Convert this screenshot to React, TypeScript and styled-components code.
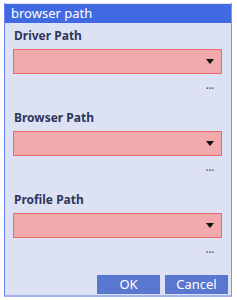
import styled, { createGlobalStyle } from 'styled-components';

const GlobalStyle = createGlobalStyle`
  html, body {
    margin: 0;
    padding: 0;
    background: #ffffff;
  }
  body {
    font-family: "Noto Sans", "Open Sans", sans-serif;
  }
`;

const fields = ['Driver Path', 'Browser Path', 'Profile Path'];

const ArrowIcon = () => (
  <svg width="8" height="5" viewBox="0 0 8 5">
    <path d="M0 0 H8 L4 5 Z" fill="#111" />
  </svg>
);

const App = () => {
  return (
    <>
      <GlobalStyle />
      <Page>
        <Dialog>
          <TitleBar>browser path</TitleBar>
          <Body>
            {fields.map((label) => (
              <Field key={label}>
                <Label>{label}</Label>
                <PathSelect>
                  <ArrowIcon />
                </PathSelect>
                <MoreRow>
                  <More>...</More>
                </MoreRow>
              </Field>
            ))}
            <ButtonRow>
              <Button>OK</Button>
              <Button>Cancel</Button>
            </ButtonRow>
          </Body>
        </Dialog>
      </Page>
    </>
  );
};

export default App;

const Page = styled.div`
  width: 237px;
  height: 300px;
  padding: 3px 0 0 4px;
  box-sizing: border-box;
`;

const Dialog = styled.div`
  width: 228px;
  height: 294px;
  box-sizing: border-box;
  display: flex;
  flex-direction: column;
  background: #dde1f4;
  border-left: 1px solid #6b86f2;
  border-right: 1px solid #7d95f0;
  border-bottom: 2px solid #a3b2ea;
`;

const TitleBar = styled.div`
  height: 19px;
  margin-top: 1px;
  background: #4169e1;
  color: #ffffff;
  font-size: 13px;
  line-height: 19px;
  padding-left: 6px;
`;

const Body = styled.div`
  flex: 1;
  display: flex;
  flex-direction: column;
  padding: 5px 3px 0 8px;
`;

const Field = styled.div`
  display: flex;
  flex-direction: column;
  margin-right: 6px;
`;

const Label = styled.div`
  font-size: 12px;
  line-height: 16px;
  font-weight: 700;
  color: #2e3759;
  padding-left: 1px;
`;

const PathSelect = styled.div`
  margin-top: 5px;
  height: 25px;
  box-sizing: border-box;
  background: #f2a9ab;
  border: 1px solid #e86a6d;
  display: flex;
  align-items: center;
  justify-content: flex-end;
  padding-right: 7px;
`;

const MoreRow = styled.div`
  display: flex;
  justify-content: flex-end;
  height: 36px;
  padding-right: 8px;
`;

const More = styled.span`
  font-family: "DejaVu Sans", sans-serif;
  font-size: 8px;
  font-weight: 700;
  line-height: 10px;
  margin-top: 8px;
  color: #5d6478;
  letter-spacing: -0.3px;
`;

const ButtonRow = styled.div`
  display: flex;
  justify-content: flex-end;
  gap: 5px;
  margin-top: 1px;
`;

const Button = styled.div`
  width: 63px;
  height: 19px;
  background: #5a77cf;
  color: #ffffff;
  font-size: 13px;
  line-height: 19px;
  text-align: center;
`;
